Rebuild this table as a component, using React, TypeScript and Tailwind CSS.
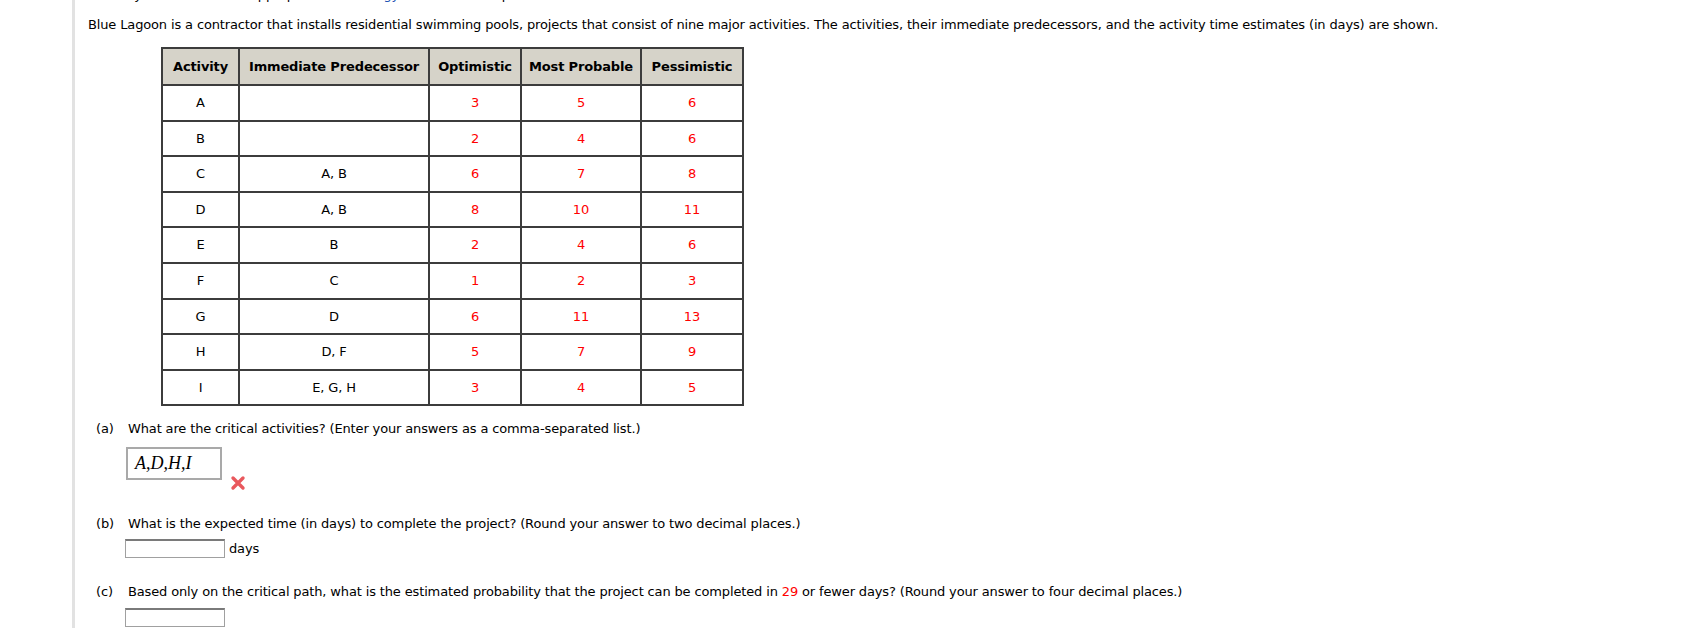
import React from "react";

const rows: [string, string, number, number, number][] = [
  ["A", "", 3, 5, 6],
  ["B", "", 2, 4, 6],
  ["C", "A, B", 6, 7, 8],
  ["D", "A, B", 8, 10, 11],
  ["E", "B", 2, 4, 6],
  ["F", "C", 1, 2, 3],
  ["G", "D", 6, 11, 13],
  ["H", "D, F", 5, 7, 9],
  ["I", "E, G, H", 3, 4, 5],
];

const WrongMark = () => (
  <svg width="16" height="16" viewBox="0 0 16 16" className="mb-[-11px] ml-[8px]">
    <path d="M3 3 L13 13 M13 3 L3 13" stroke="#e9585d" strokeWidth="3.4" strokeLinecap="round" />
  </svg>
);

const App = () => {
  return (
    <div className="w-full h-[628px] bg-white overflow-hidden flex font-['DejaVu_Sans',sans-serif] text-[13px] tracking-[-0.14px] text-black">
      <div className="w-[72px] shrink-0" />
      <div className="w-[3px] bg-[#e2e2e2] shrink-0" />
      <div className="pl-[13px] flex flex-col">
        <p className="leading-[18px] mt-[-14px] whitespace-nowrap">
          You may need to use the appropriate <span className="text-[#1f55b5]">technology</span> to answer this question.
        </p>
        <p className="leading-[18px] mt-[12px] whitespace-nowrap">
          Blue Lagoon is a contractor that installs residential swimming pools, projects that consist of nine major
          activities. The activities, their immediate predecessors, and the activity time estimates (in days) are shown.
        </p>

        <table className="table-fixed border-collapse w-[581px] ml-[73px] mt-[13px]">
          <thead>
            <tr className="bg-[#d6d3c9]">
              <th className="w-[77px] h-[37px] border-2 border-[#3c3c3c] font-bold">Activity</th>
              <th className="w-[190px] border-2 border-[#3c3c3c] font-bold">Immediate Predecessor</th>
              <th className="w-[92px] border-2 border-[#3c3c3c] font-bold">Optimistic</th>
              <th className="w-[120px] border-2 border-[#3c3c3c] font-bold">Most Probable</th>
              <th className="w-[102px] border-2 border-[#3c3c3c] font-bold">Pessimistic</th>
            </tr>
          </thead>
          <tbody>
            {rows.map(([act, pred, o, m, p]) => (
              <tr key={act}>
                <td className="h-[35.6px] border-2 border-[#3c3c3c] text-center">{act}</td>
                <td className="border-2 border-[#3c3c3c] text-center">{pred}</td>
                <td className="border-2 border-[#3c3c3c] text-center text-[#ff0000]">{o}</td>
                <td className="border-2 border-[#3c3c3c] text-center text-[#ff0000]">{m}</td>
                <td className="border-2 border-[#3c3c3c] text-center text-[#ff0000]">{p}</td>
              </tr>
            ))}
          </tbody>
        </table>

        <div className="flex mt-[14px] ml-[8px] leading-[18px] whitespace-nowrap">
          <span className="w-[32px]">(a)</span>
          <span>What are the critical activities? (Enter your answers as a comma-separated list.)</span>
        </div>
        <div className="flex items-end mt-[9px] ml-[38px]">
          <div className="w-[96px] h-[33px] border-2 border-[#a9a9a9] flex items-center pl-[7px] font-['Liberation_Serif',serif] italic text-[18px] tracking-normal">
            A,D,H,I
          </div>
          <WrongMark />
        </div>

        <div className="flex mt-[35px] ml-[8px] leading-[18px] whitespace-nowrap">
          <span className="w-[32px]">(b)</span>
          <span>What is the expected time (in days) to complete the project? (Round your answer to two decimal places.)</span>
        </div>
        <div className="flex items-center mt-[6px] ml-[37px] gap-[4px]">
          <div className="w-[100px] h-[19px] border border-[#a0a0a0] border-t-2 border-t-[#7a7a7a]" />
          <span className="leading-[18px]">days</span>
        </div>

        <div className="flex mt-[25px] ml-[8px] leading-[18px] whitespace-nowrap">
          <span className="w-[32px]">(c)</span>
          <span>
            Based only on the critical path, what is the estimated probability that the project can be completed in{" "}
            <span className="text-[#ff0000]">29</span> or fewer days? (Round your answer to four decimal places.)
          </span>
        </div>
        <div className="flex mt-[7px] ml-[37px]">
          <div className="w-[100px] h-[19px] border border-[#a0a0a0] border-t-2 border-t-[#7a7a7a]" />
        </div>
      </div>
    </div>
  );
};

export default App;
